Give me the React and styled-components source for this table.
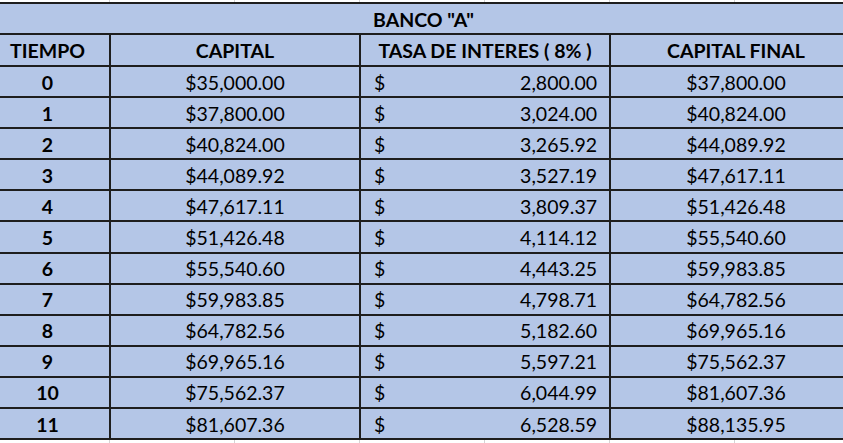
import React from "react";
import styled, { createGlobalStyle } from "styled-components";

const rows = [
  [0, "$35,000.00", "2,800.00", "$37,800.00"],
  [1, "$37,800.00", "3,024.00", "$40,824.00"],
  [2, "$40,824.00", "3,265.92", "$44,089.92"],
  [3, "$44,089.92", "3,527.19", "$47,617.11"],
  [4, "$47,617.11", "3,809.37", "$51,426.48"],
  [5, "$51,426.48", "4,114.12", "$55,540.60"],
  [6, "$55,540.60", "4,443.25", "$59,983.85"],
  [7, "$59,983.85", "4,798.71", "$64,782.56"],
  [8, "$64,782.56", "5,182.60", "$69,965.16"],
  [9, "$69,965.16", "5,597.21", "$75,562.37"],
  [10, "$75,562.37", "6,044.99", "$81,607.36"],
  [11, "$81,607.36", "6,528.59", "$88,135.95"],
];

const GlobalStyle = createGlobalStyle`
  html, body {
    margin: 0;
    padding: 0;
    background: #ffffff;
    overflow: hidden;
  }
  body {
    font-family: "Lato", "Liberation Sans", sans-serif;
    color: #000;
  }
`;

export default function App() {
  return (
    <>
      <GlobalStyle />
      <Page>
        <GridStrip $height={2}>
          {Array.from({ length: 7 }).map((_, i) => (
            <GridCol key={i} />
          ))}
        </GridStrip>
        <Sheet>
          <Title>BANCO "A"</Title>
          <Head>TIEMPO</Head>
          <Head>CAPITAL</Head>
          <Head>TASA DE INTERES ( 8% )</Head>
          <Head>CAPITAL FINAL</Head>
          {rows.map(([t, cap, rate, fin]) => (
            <React.Fragment key={t}>
              <Cell $bold>{t}</Cell>
              <Cell>{cap}</Cell>
              <Accounting>
                <span>$</span>
                <span>{rate}</span>
              </Accounting>
              <Cell>{fin}</Cell>
            </React.Fragment>
          ))}
        </Sheet>
        <GridStrip $height={4}>
          {Array.from({ length: 7 }).map((_, i) => (
            <GridCol key={i} />
          ))}
        </GridStrip>
      </Page>
    </>
  );
}

const Page = styled.div`
  width: 843px;
  height: 443px;
  overflow: hidden;
`;

const GridStrip = styled.div`
  display: flex;
  height: ${(p) => p.$height}px;
  margin-left: -15px;
`;

const GridCol = styled.div`
  flex: 0 0 125px;
  box-sizing: border-box;
  border-right: 1px solid #d4d4d4;
`;

const Sheet = styled.div`
  display: grid;
  grid-template-columns: 125px 250px 250px 250px;
  grid-template-rows: 31px 32px repeat(12, 31.1px);
  margin-left: -14px;
  width: 875px;
  border-top: 2px solid #1e1e1e;
  background: #b4c6e7;
  font-size: 19.5px;
`;

const Base = styled.div`
  box-sizing: border-box;
  display: flex;
  align-items: center;
  border-bottom: 2px solid #1e1e1e;
  border-right: 2px solid #1e1e1e;
  white-space: nowrap;
  padding-top: 1px;
`;

const Title = styled(Base)`
  grid-column: 1 / -1;
  justify-content: center;
  font-weight: 700;
  border-right: none;
`;

const Head = styled(Base)`
  justify-content: center;
  font-weight: 700;
  &:nth-child(5) {
    border-right: none;
  }
`;

const Cell = styled(Base)`
  justify-content: center;
  font-weight: ${(p) => (p.$bold ? 700 : 400)};
  &:nth-child(4n + 1) {
    border-right: none;
  }
`;

const Accounting = styled(Base)`
  justify-content: space-between;
  padding: 1px 12px 0 13px;
`;
